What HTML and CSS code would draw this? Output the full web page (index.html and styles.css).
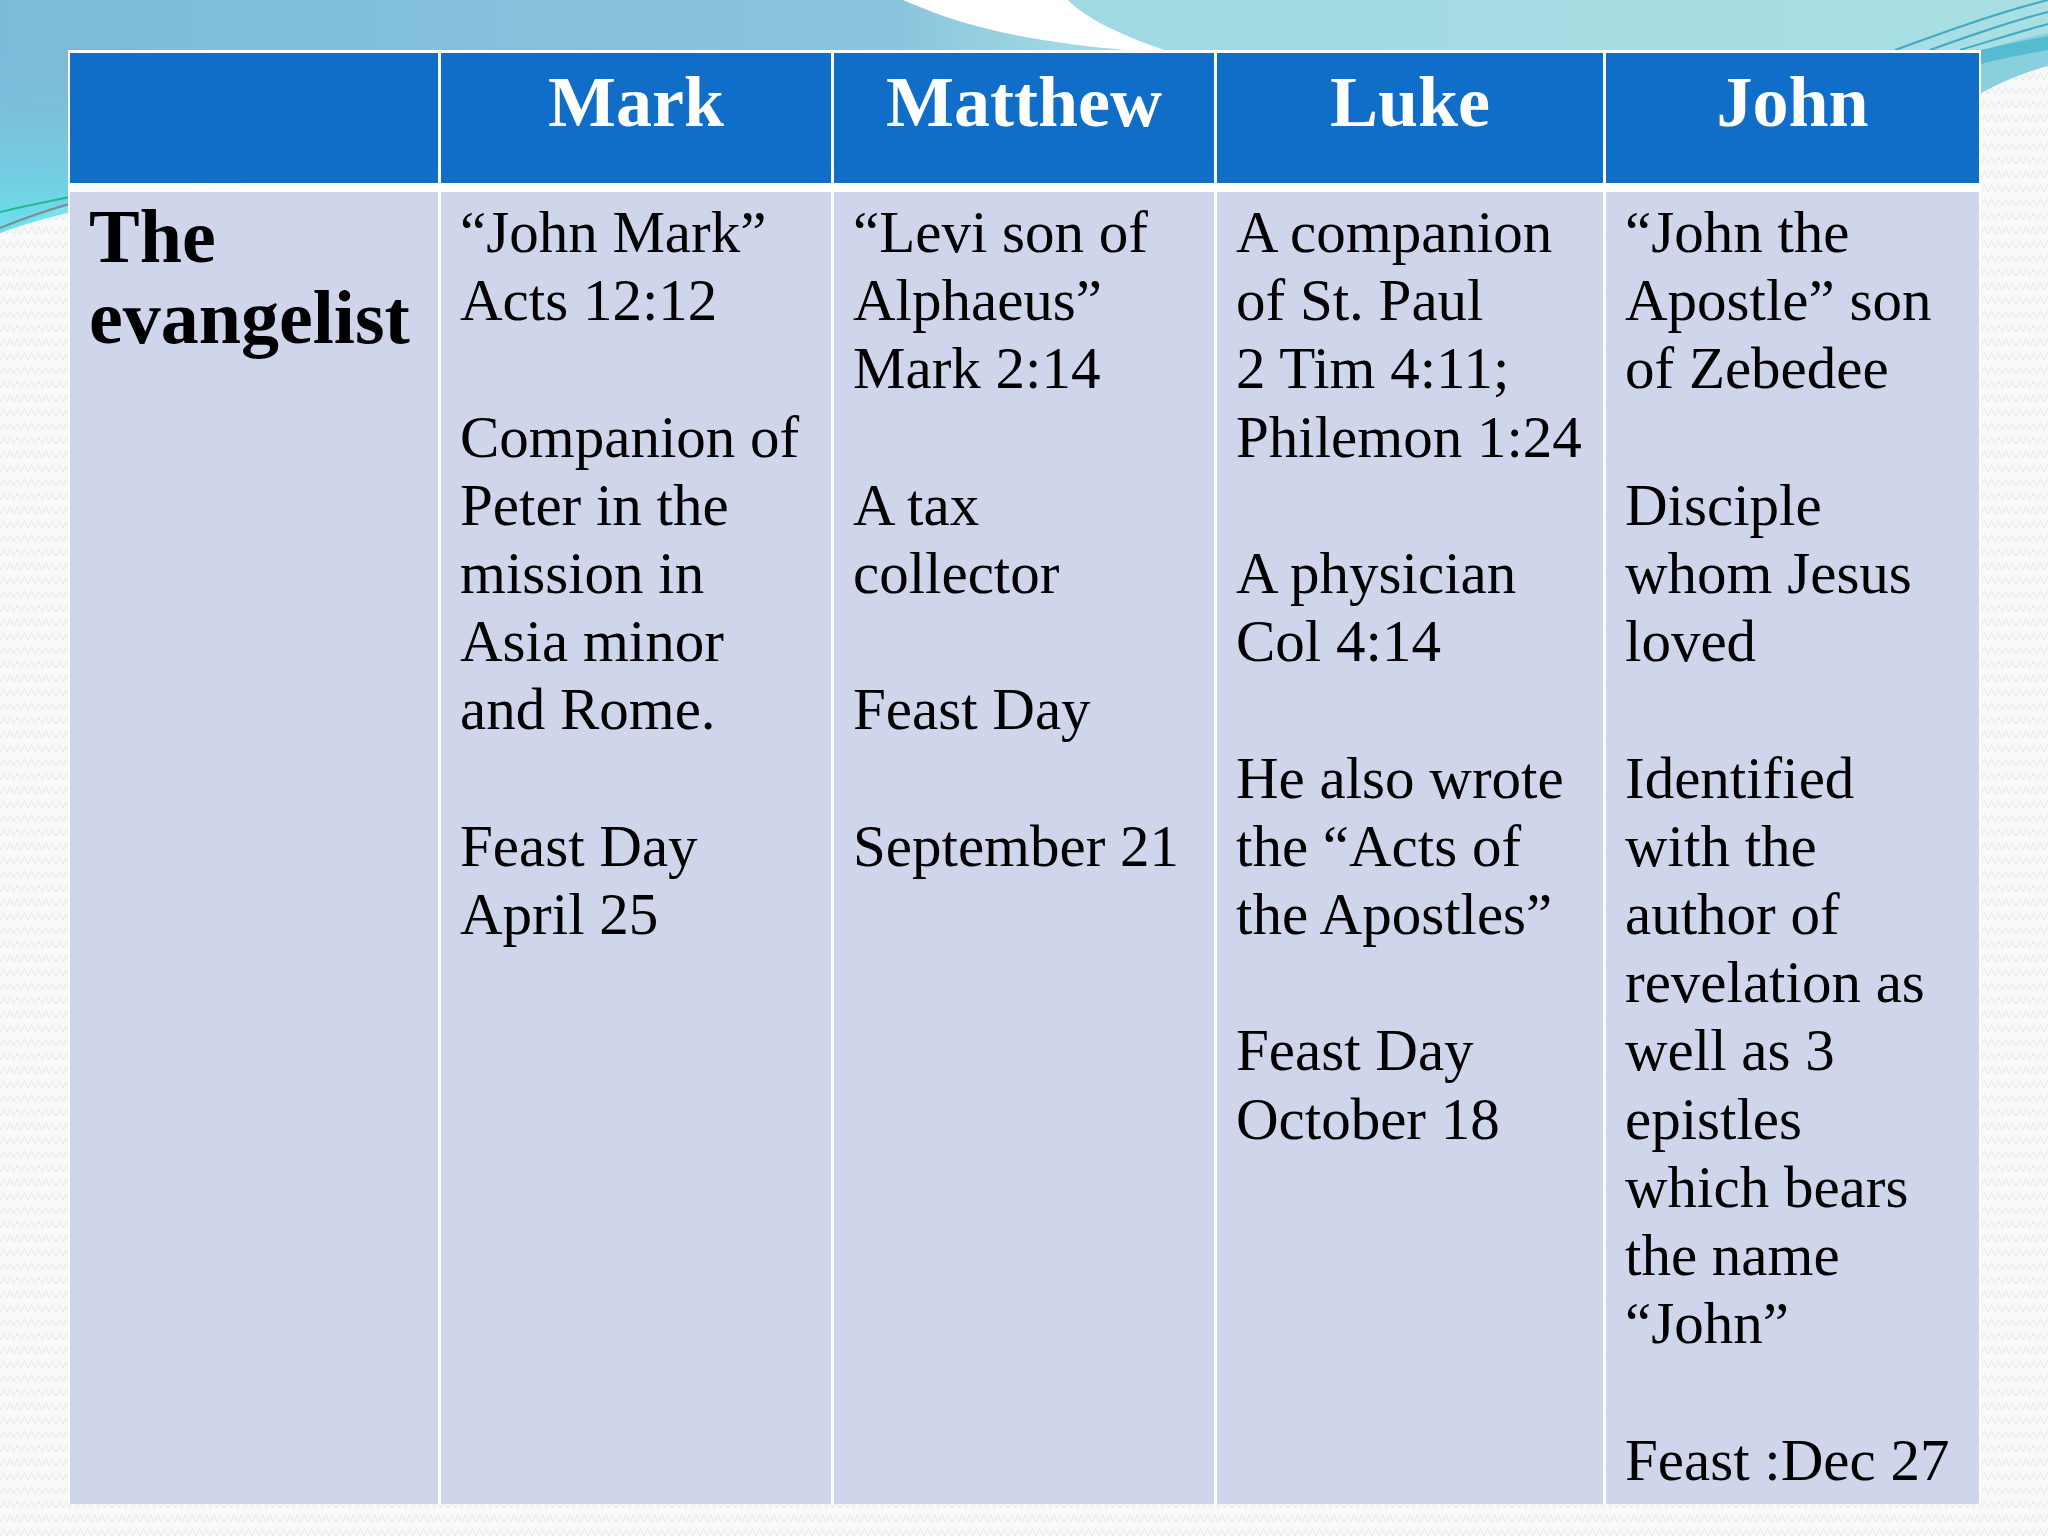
FILE: index.html
```html
<!DOCTYPE html>
<html lang="en">
<head>
<meta charset="utf-8">
<title>The Evangelists</title>
<link rel="stylesheet" href="styles.css">
</head>
<body>
<main class="slide">
  <div class="table">
    <div class="th"></div>
    <div class="th">Mark</div>
    <div class="th">Matthew</div>
    <div class="th">Luke</div>
    <div class="th">John</div>

    <div class="td lead">The<br>evangelist</div>
    <div class="td">“John Mark”<br>Acts 12:12<br><br>Companion of<br>Peter in the<br>mission in<br>Asia minor<br>and Rome.<br><br>Feast Day<br>April 25</div>
    <div class="td">“Levi son of<br>Alphaeus”<br>Mark 2:14<br><br>A tax<br>collector<br><br>Feast Day<br><br>September 21</div>
    <div class="td">A companion<br>of St. Paul<br>2 Tim 4:11;<br>Philemon 1:24<br><br>A physician<br>Col 4:14<br><br>He also wrote<br>the “Acts of<br>the Apostles”<br><br>Feast Day<br>October 18</div>
    <div class="td">“John the<br>Apostle” son<br>of Zebedee<br><br>Disciple<br>whom Jesus<br>loved<br><br>Identified<br>with the<br>author of<br>revelation as<br>well as 3<br>epistles<br>which bears<br>the name<br>“John”<br><br>Feast :Dec 27</div>
  </div>
</main>
</body>
</html>
```
FILE: styles.css
```css
html, body {
  margin: 0;
  padding: 0;
}

body {
  width: 2048px;
  height: 1536px;
  overflow: hidden;
  font-family: "Liberation Serif", serif;
  background-color: #f8f9f9;
  background-repeat: no-repeat;
  background-image: url("data:image/svg+xml,<svg xmlns='http://www.w3.org/2000/svg' width='2048' height='1536' viewBox='0 0 2048 1536'><defs><pattern id='t' width='14' height='14' patternUnits='userSpaceOnUse'><path d='M0 10 L3.5 3 L7 10 L10.5 3 L14 10' fill='none' stroke='%23e6e8e8' stroke-width='1'/></pattern><linearGradient id='b' x1='0' y1='0' x2='2048' y2='0' gradientUnits='userSpaceOnUse'><stop offset='0' stop-color='%237cbad8'/><stop offset='0.44' stop-color='%238ac5dd'/><stop offset='0.52' stop-color='%23a0d9e2'/><stop offset='1' stop-color='%23a9dfe3'/></linearGradient><linearGradient id='c' x1='0' y1='40' x2='0' y2='235' gradientUnits='userSpaceOnUse'><stop offset='0' stop-color='%237bbcd8' stop-opacity='0'/><stop offset='1' stop-color='%2369e3ec'/></linearGradient></defs><rect width='2048' height='1536' fill='%23f8f9f9'/><rect width='2048' height='1536' fill='url(%23t)'/><path d='M0 0 H2048 V66 C2030 70 2000 82 1981 93 C1900 130 1600 150 1400 160 L200 175 C130 185 60 205 0 233 Z' fill='url(%23b)'/><path d='M0 40 H400 V170 C250 175 90 200 0 233 Z' fill='url(%23c)'/><path d='M903 0 C960 25 1020 42 1150 52 L1170 52 C1120 35 1085 18 1068 0 Z' fill='%23ffffff'/><path d='M0 212 C25 206 50 201 70 197' stroke='%2320b890' stroke-width='2' fill='none'/><path d='M0 228 C25 218 50 209 70 204' stroke='%23808890' stroke-width='2' fill='none'/><path d='M1981 52 C2000 45 2025 38 2048 33 V66 C2030 70 2000 82 1981 93 Z' fill='%2388d0dd'/><path d='M1981 50 C2005 44 2028 40 2048 36 V50 C2025 54 2000 59 1981 64 Z' fill='%2356bad0'/><path d='M1895 50 C1950 30 2000 12 2048 0' stroke='%2340aac4' stroke-width='2' fill='none'/><path d='M1930 50 C1980 32 2015 20 2048 12' stroke='%2340aac4' stroke-width='2' fill='none'/><path d='M1960 50 C2000 38 2025 30 2048 24' stroke='%2340aac4' stroke-width='2' fill='none'/></svg>");
}

.slide {
  padding: 50px 0 0 68px;
}

.table {
  display: grid;
  grid-template-columns: 368px 390px 380px 386px 373px;
  grid-template-rows: 130px 1312px;
  column-gap: 3px;
  row-gap: 9px;
  width: max-content;
  padding: 3px 2px 0 2px;
  background: rgba(255, 255, 255, 0.95);
}

.th {
  background: #106ec8;
  color: #ffffff;
  font-weight: bold;
  font-size: 72px;
  line-height: 86px;
  text-align: center;
  padding-top: 6px;
  white-space: nowrap;
}

.td {
  background: #cfd5ea;
  color: #000000;
  font-size: 59px;
  line-height: 68.2px;
  padding: 6px 19px 0 19px;
  white-space: nowrap;
}

.td.lead {
  font-weight: bold;
  font-size: 76px;
  line-height: 81px;
  padding-top: 4px;
}
```
